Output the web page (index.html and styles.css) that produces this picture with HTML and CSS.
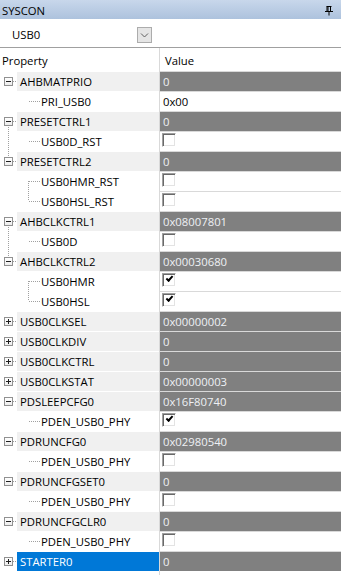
FILE: index.html
```html
<!DOCTYPE html>
<html>
<head>
<meta charset="utf-8">
<link rel="stylesheet" href="styles.css">
</head>
<body>
<div class="panel">
  <div class="titlebar">
    <span class="title">SYSCON</span>
    <svg class="pin" width="8" height="10" viewBox="0 0 8 10"><path d="M1.5 0.5h5M2 0.5v5M3 0.5v5M5.5 0.5v5M0 5.5h8M4 5.5v4" stroke="#000" stroke-width="1" fill="none"/></svg>
  </div>
  <div class="selectbar">
    <span class="selval">USB0</span>
    <span class="dropbtn"><svg width="9" height="6" viewBox="0 0 9 6"><path d="M1 1.5l3.5 3.5l3.5-3.5" stroke="#606060" stroke-width="1" fill="none"/></svg></span>
  </div>
  <div class="colhead">
    <div class="c-prop">Property</div>
    <div class="c-val">Value</div>
  </div>
  <div class="rows">
    <div class="row p"><div class="tree"><span class="box minus"></span><span class="hl"></span></div><div class="label">AHBMATPRIO</div><div class="value dark">0</div></div>
    <div class="row c"><div class="tree"></div><div class="label"><span class="cl"></span>PRI_USB0</div><div class="value">0x00</div></div>
    <div class="row p"><div class="tree vb"><span class="box minus"></span><span class="hl"></span></div><div class="label">PRESETCTRL1</div><div class="value dark">0</div></div>
    <div class="row c"><div class="tree vf"></div><div class="label"><span class="cl"></span>USB0D_RST</div><div class="value"><span class="chk"></span></div></div>
    <div class="row p"><div class="tree vt"><span class="box minus"></span><span class="hl"></span></div><div class="label">PRESETCTRL2</div><div class="value dark">0</div></div>
    <div class="row c"><div class="tree"></div><div class="label"><span class="cl first"></span>USB0HMR_RST</div><div class="value"><span class="chk"></span></div></div>
    <div class="row c"><div class="tree"></div><div class="label"><span class="cl last"></span>USB0HSL_RST</div><div class="value"><span class="chk"></span></div></div>
    <div class="row p"><div class="tree vb"><span class="box minus"></span><span class="hl"></span></div><div class="label">AHBCLKCTRL1</div><div class="value dark">0x08007801</div></div>
    <div class="row c"><div class="tree vf"></div><div class="label"><span class="cl"></span>USB0D</div><div class="value"><span class="chk"></span></div></div>
    <div class="row p"><div class="tree vt"><span class="box minus"></span><span class="hl"></span></div><div class="label">AHBCLKCTRL2</div><div class="value dark">0x00030680</div></div>
    <div class="row c"><div class="tree"></div><div class="label"><span class="cl first"></span>USB0HMR</div><div class="value"><span class="chk on"></span></div></div>
    <div class="row c"><div class="tree"></div><div class="label"><span class="cl last"></span>USB0HSL</div><div class="value"><span class="chk on"></span></div></div>
    <div class="row p"><div class="tree"><span class="box plus"></span><span class="hl"></span></div><div class="label">USB0CLKSEL</div><div class="value dark">0x00000002</div></div>
    <div class="row p"><div class="tree"><span class="box plus"></span><span class="hl"></span></div><div class="label">USB0CLKDIV</div><div class="value dark">0</div></div>
    <div class="row p"><div class="tree"><span class="box plus"></span><span class="hl"></span></div><div class="label">USB0CLKCTRL</div><div class="value dark">0</div></div>
    <div class="row p"><div class="tree"><span class="box plus"></span><span class="hl"></span></div><div class="label">USB0CLKSTAT</div><div class="value dark">0x00000003</div></div>
    <div class="row p"><div class="tree"><span class="box minus"></span><span class="hl"></span></div><div class="label">PDSLEEPCFG0</div><div class="value dark">0x16F80740</div></div>
    <div class="row c"><div class="tree"></div><div class="label"><span class="cl"></span>PDEN_USB0_PHY</div><div class="value"><span class="chk on"></span></div></div>
    <div class="row p"><div class="tree"><span class="box minus"></span><span class="hl"></span></div><div class="label">PDRUNCFG0</div><div class="value dark">0x02980540</div></div>
    <div class="row c"><div class="tree"></div><div class="label"><span class="cl"></span>PDEN_USB0_PHY</div><div class="value"><span class="chk"></span></div></div>
    <div class="row p"><div class="tree"><span class="box minus"></span><span class="hl"></span></div><div class="label">PDRUNCFGSET0</div><div class="value dark">0</div></div>
    <div class="row c"><div class="tree"></div><div class="label"><span class="cl"></span>PDEN_USB0_PHY</div><div class="value"><span class="chk"></span></div></div>
    <div class="row p"><div class="tree"><span class="box minus"></span><span class="hl"></span></div><div class="label">PDRUNCFGCLR0</div><div class="value dark">0</div></div>
    <div class="row c"><div class="tree"></div><div class="label"><span class="cl"></span>PDEN_USB0_PHY</div><div class="value"><span class="chk"></span></div></div>
    <div class="row p sel"><div class="tree"><span class="box plus"></span><span class="hl"></span></div><div class="label">STARTER0</div><div class="value dark">0</div></div>
  </div>
  <div class="filler"></div>
</div>
</body>
</html>
```

FILE: styles.css
```css
html, body {
  margin: 0;
  padding: 0;
  background: #fff;
}
body {
  font-family: "Open Sans", "Noto Sans", sans-serif;
  font-size: 11.3px;
  color: #000;
  width: 341px;
  height: 575px;
  overflow: hidden;
}
.panel {
  display: flex;
  flex-direction: column;
  height: 575px;
}
.titlebar {
  height: 19px;
  flex: none;
  display: flex;
  align-items: center;
  justify-content: space-between;
  padding: 1px 8px 0 2px;
  box-sizing: border-box;
  background: linear-gradient(#c8d7eb, #adc2dd);
}
.pin {
  display: block;
  margin-top: 1px;
}
.selectbar {
  height: 29px;
  flex: none;
  box-sizing: border-box;
  border-bottom: 1px solid #a0a0a0;
  display: flex;
  align-items: center;
  padding-left: 12px;
}
.selval {
  width: 125px;
  padding-top: 2px;
}
.dropbtn {
  width: 15px;
  height: 16px;
  box-sizing: border-box;
  border: 1px solid #acacac;
  background: #e5e5e5;
  display: flex;
  align-items: center;
  justify-content: center;
  margin-top: 3px;
}
.dropbtn svg {
  display: block;
}
.colhead {
  height: 23px;
  flex: none;
  display: grid;
  grid-template-columns: 159px 1fr;
}
.c-prop {
  padding: 3px 0 0 2px;
  line-height: 20px;
}
.c-val {
  border-left: 1px solid #d9d9d9;
  padding: 3px 0 0 5px;
  line-height: 20px;
}
.rows {
  flex: none;
  display: flex;
  flex-direction: column;
}
.row {
  display: grid;
  grid-template-columns: 17px 142px 1fr;
  height: 20px;
}
.tree {
  position: relative;
  border-top: 1px solid #fff;
  display: flex;
  align-items: center;
  padding-left: 4px;
}
.label {
  border-top: 1px solid #fff;
  line-height: 19px;
  padding-left: 3px;
  display: flex;
  align-items: center;
  white-space: nowrap;
}
.p .label {
  background: #f0f0f0;
}
.c .label {
  padding-left: 0;
}
.sel .label {
  background: #0078d7;
  color: #fff;
}
.value {
  border-top: 1px solid #d9d9d9;
  border-left: 1px solid #d9d9d9;
  padding-left: 3px;
  line-height: 19px;
  display: flex;
  align-items: flex-start;
  background: #fff;
}
.value.dark {
  background: #808080;
  color: #eef0f4;
}
.box {
  width: 9px;
  height: 9px;
  box-sizing: border-box;
  border: 1px solid #919191;
  background: linear-gradient(#fff, #ececec);
  position: relative;
  flex: none;
  z-index: 1;
}
.box::before {
  content: "";
  position: absolute;
  left: 1px;
  top: 3px;
  width: 5px;
  height: 1px;
  background: #1e1e1e;
}
.box.plus::after {
  content: "";
  position: absolute;
  left: 3px;
  top: 1px;
  width: 1px;
  height: 5px;
  background: #1e1e1e;
}
.hl {
  width: 4px;
  height: 1px;
  background: linear-gradient(to right, #a0a0a0 50%, transparent 50%) 0 0 / 2px 1px repeat-x;
}
.tree.vb::before,
.tree.vt::before,
.tree.vf::before {
  content: "";
  position: absolute;
  left: 8px;
  width: 1px;
  background: linear-gradient(#a0a0a0 50%, transparent 50%) 0 0 / 1px 2px repeat-y;
}
.tree.vb::before { top: 9px; bottom: 0; }
.tree.vt::before { top: -1px; height: 10px; }
.tree.vf::before { top: -1px; bottom: 0; }
.cl {
  width: 24px;
  height: 19px;
  flex: none;
  position: relative;
}
.cl::before {
  content: "";
  position: absolute;
  left: 12px;
  top: 9px;
  width: 11px;
  height: 1px;
  background: linear-gradient(to right, #a0a0a0 50%, transparent 50%) 0 0 / 2px 1px repeat-x;
}
.cl.first::after,
.cl.last::after {
  content: "";
  position: absolute;
  left: 11px;
  width: 1px;
  background: linear-gradient(#a0a0a0 50%, transparent 50%) 0 0 / 1px 2px repeat-y;
}
.cl.first::after { top: 9px; bottom: -1px; }
.cl.last::after { top: -1px; height: 10px; }
.chk {
  width: 14px;
  height: 14px;
  box-sizing: border-box;
  margin: 1px 0 0 -1px;
  border: 1px solid;
  border-color: #a0a0a0 #fff #fff #a0a0a0;
  box-shadow: inset 1px 1px #696969, inset -1px -1px #e3e3e3;
  background: #fff;
  position: relative;
}
.chk.on::after {
  content: "";
  position: absolute;
  left: 3px;
  top: 2px;
  width: 5px;
  height: 2px;
  border-left: 2px solid #000;
  border-bottom: 2px solid #000;
  transform: rotate(-48deg);
  transform-origin: 50% 50%;
}
.filler {
  flex: 1;
  margin-left: 159px;
  border-left: 1px solid #d9d9d9;
}
```
